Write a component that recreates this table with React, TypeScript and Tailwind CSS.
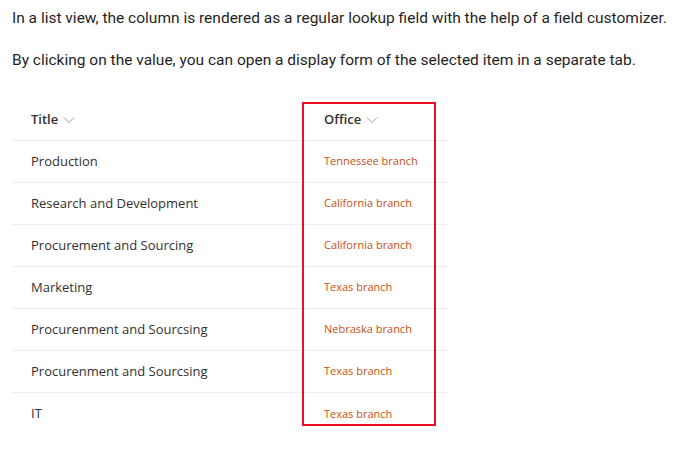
import React from "react";

const rows = [
  ["Production", "Tennessee branch"],
  ["Research and Development", "California branch"],
  ["Procurement and Sourcing", "California branch"],
  ["Marketing", "Texas branch"],
  ["Procurenment and Sourcsing", "Nebraska branch"],
  ["Procurenment and Sourcsing", "Texas branch"],
  ["IT", "Texas branch"],
];

function Chevron() {
  return (
    <svg width="12" height="8" viewBox="0 0 12 8" className="ml-[5px] mt-[1px]">
      <path d="M1 1.5 L6 6.5 L11 1.5" fill="none" stroke="#a19f9d" strokeWidth="1" />
    </svg>
  );
}

export default function App() {
  return (
    <div className="w-[690px] h-[468px] bg-white relative overflow-hidden">
      <div className="px-[12px] pt-[6px] text-[15.5px] leading-[24px] text-[#1f1f1f] font-['Roboto',sans-serif] whitespace-nowrap">
        <p>In a list view, the column is rendered as a regular lookup field with the help of a field customizer.</p>
        <p className="mt-[18px]">By clicking on the value, you can open a display form of the selected item in a separate tab.</p>
      </div>
      <div className="ml-[12px] mt-[27px] w-[436px] font-['Open_Sans','Noto_Sans',sans-serif]">
        <div className="flex h-[42px] items-center border-b border-[#edebe9] text-[13px] font-semibold text-[#323130]">
          <div className="w-[292px] pl-[19px] flex items-center">Title<Chevron /></div>
          <div className="pl-[20px] flex items-center">Office<Chevron /></div>
        </div>
        {rows.map(([t, o], i) => (
          <div key={i} className={`flex h-[42px] items-center ${i < rows.length - 1 ? "border-b border-[#edebe9]" : ""}`}>
            <div className="w-[292px] pl-[19px] text-[13px] text-[#323130]">{t}</div>
            <div className="pl-[20px] text-[11px] text-[#ca5010]">{o}</div>
          </div>
        ))}
      </div>
      <div className="absolute left-[302px] top-[102px] w-[134px] h-[324px] border-2 border-[#e81123]" />
    </div>
  );
}
